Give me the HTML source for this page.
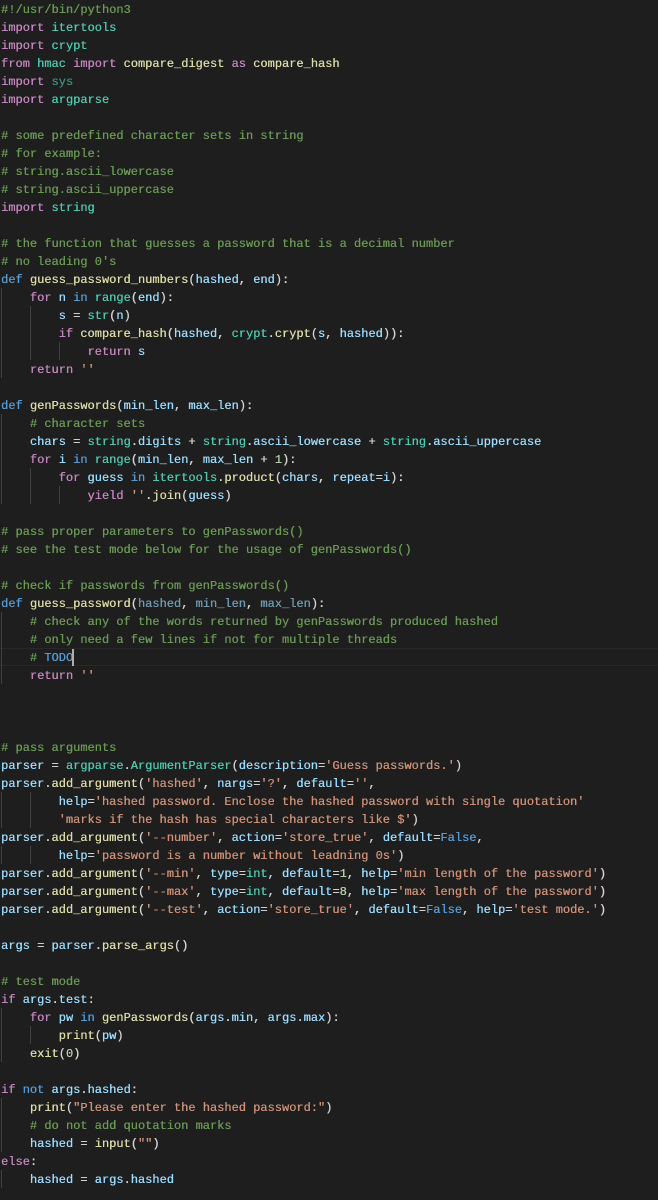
<!DOCTYPE html>
<html><head><meta charset="utf-8"><style>
html,body{margin:0;padding:0;background:#1e1e1e;width:658px;height:1200px;overflow:hidden}
pre{margin:0;padding:1px 0 0 1px;font-family:"Liberation Mono",monospace;font-size:12px;line-height:18px;color:#d4d4d4;position:relative;z-index:1;text-shadow:0.3px 0 0 currentColor}
.c{color:#6a9955}.k{color:#c586c0}.b{color:#569cd6}.f{color:#dcdcaa}.v{color:#9cdcfe}.t{color:#4ec9b0}.s{color:#ce9178}.n{color:#b5cea8}
.dv{color:#9cdcfe;opacity:.65}.dt{color:#4ec9b0;opacity:.65}
.g{position:absolute;width:1px;background:#404040;z-index:0}
.cur{position:absolute;left:0;width:658px;height:16px;border-top:1px solid #282828;border-bottom:1px solid #282828;top:648px}
.caret{display:inline-block;width:2px;height:17px;background:#aeafad;vertical-align:top;margin-left:-1px}
</style></head><body>
<div class="cur"></div>
<div class="g" style="left:1px;top:288px;height:90px"></div>
<div class="g" style="left:30px;top:306px;height:54px"></div>
<div class="g" style="left:59px;top:342px;height:18px"></div>
<div class="g" style="left:1px;top:414px;height:90px"></div>
<div class="g" style="left:30px;top:468px;height:36px"></div>
<div class="g" style="left:59px;top:486px;height:18px"></div>
<div class="g" style="left:1px;top:612px;height:72px"></div>
<div class="g" style="left:1px;top:792px;height:36px"></div>
<div class="g" style="left:30px;top:792px;height:36px"></div>
<div class="g" style="left:1px;top:846px;height:18px"></div>
<div class="g" style="left:30px;top:846px;height:18px"></div>
<div class="g" style="left:1px;top:1008px;height:54px"></div>
<div class="g" style="left:30px;top:1026px;height:18px"></div>
<div class="g" style="left:1px;top:1098px;height:54px"></div>
<div class="g" style="left:1px;top:1170px;height:18px"></div>
<pre><span class="c">#!/usr/bin/python3</span>
<span class="k">import</span> <span class="t">itertools</span>
<span class="k">import</span> <span class="t">crypt</span>
<span class="k">from</span> <span class="t">hmac</span> <span class="k">import</span> <span class="f">compare_digest</span> <span class="k">as</span> <span class="f">compare_hash</span>
<span class="k">import</span> <span class="dt">sys</span>
<span class="k">import</span> <span class="t">argparse</span>

<span class="c"># some predefined character sets in string</span>
<span class="c"># for example:</span>
<span class="c"># string.ascii_lowercase</span>
<span class="c"># string.ascii_uppercase</span>
<span class="k">import</span> <span class="t">string</span>

<span class="c"># the function that guesses a password that is a decimal number</span>
<span class="c"># no leading 0's</span>
<span class="b">def</span> <span class="f">guess_password_numbers</span>(<span class="v">hashed</span>, <span class="v">end</span>):
    <span class="k">for</span> <span class="v">n</span> <span class="b">in</span> <span class="t">range</span>(<span class="v">end</span>):
        <span class="v">s</span> = <span class="t">str</span>(<span class="v">n</span>)
        <span class="k">if</span> <span class="f">compare_hash</span>(<span class="v">hashed</span>, <span class="t">crypt</span>.<span class="f">crypt</span>(<span class="v">s</span>, <span class="v">hashed</span>)):
            <span class="k">return</span> <span class="v">s</span>
    <span class="k">return</span> <span class="s">''</span>

<span class="b">def</span> <span class="f">genPasswords</span>(<span class="v">min_len</span>, <span class="v">max_len</span>):
    <span class="c"># character sets</span>
    <span class="v">chars</span> = <span class="t">string</span>.<span class="v">digits</span> + <span class="t">string</span>.<span class="v">ascii_lowercase</span> + <span class="t">string</span>.<span class="v">ascii_uppercase</span>
    <span class="k">for</span> <span class="v">i</span> <span class="b">in</span> <span class="t">range</span>(<span class="v">min_len</span>, <span class="v">max_len</span> + <span class="n">1</span>):
        <span class="k">for</span> <span class="v">guess</span> <span class="b">in</span> <span class="t">itertools</span>.<span class="f">product</span>(<span class="v">chars</span>, <span class="v">repeat</span>=<span class="v">i</span>):
            <span class="k">yield</span> <span class="s">''</span>.<span class="f">join</span>(<span class="v">guess</span>)

<span class="c"># pass proper parameters to genPasswords()</span>
<span class="c"># see the test mode below for the usage of genPasswords()</span>

<span class="c"># check if passwords from genPasswords()</span>
<span class="b">def</span> <span class="f">guess_password</span>(<span class="dv">hashed</span>, <span class="dv">min_len</span>, <span class="dv">max_len</span>):
    <span class="c"># check any of the words returned by genPasswords produced hashed</span>
    <span class="c"># only need a few lines if not for multiple threads</span>
    <span class="c"># </span><span class="b">TODO</span><span class="caret"></span>
    <span class="k">return</span> <span class="s">''</span>



<span class="c"># pass arguments</span>
<span class="v">parser</span> = <span class="t">argparse</span>.<span class="t">ArgumentParser</span>(<span class="v">description</span>=<span class="s">'Guess passwords.'</span>)
<span class="v">parser</span>.<span class="f">add_argument</span>(<span class="s">'hashed'</span>, <span class="v">nargs</span>=<span class="s">'?'</span>, <span class="v">default</span>=<span class="s">''</span>,
        <span class="v">help</span>=<span class="s">'hashed password. Enclose the hashed password with single quotation'</span>
        <span class="s">'marks if the hash has special characters like $'</span>)
<span class="v">parser</span>.<span class="f">add_argument</span>(<span class="s">'--number'</span>, <span class="v">action</span>=<span class="s">'store_true'</span>, <span class="v">default</span>=<span class="b">False</span>,
        <span class="v">help</span>=<span class="s">'password is a number without leadning 0s'</span>)
<span class="v">parser</span>.<span class="f">add_argument</span>(<span class="s">'--min'</span>, <span class="v">type</span>=<span class="t">int</span>, <span class="v">default</span>=<span class="n">1</span>, <span class="v">help</span>=<span class="s">'min length of the password'</span>)
<span class="v">parser</span>.<span class="f">add_argument</span>(<span class="s">'--max'</span>, <span class="v">type</span>=<span class="t">int</span>, <span class="v">default</span>=<span class="n">8</span>, <span class="v">help</span>=<span class="s">'max length of the password'</span>)
<span class="v">parser</span>.<span class="f">add_argument</span>(<span class="s">'--test'</span>, <span class="v">action</span>=<span class="s">'store_true'</span>, <span class="v">default</span>=<span class="b">False</span>, <span class="v">help</span>=<span class="s">'test mode.'</span>)

<span class="v">args</span> = <span class="v">parser</span>.<span class="f">parse_args</span>()

<span class="c"># test mode</span>
<span class="k">if</span> <span class="v">args</span>.<span class="v">test</span>:
    <span class="k">for</span> <span class="v">pw</span> <span class="b">in</span> <span class="f">genPasswords</span>(<span class="v">args</span>.<span class="v">min</span>, <span class="v">args</span>.<span class="v">max</span>):
        <span class="f">print</span>(<span class="v">pw</span>)
    <span class="f">exit</span>(<span class="n">0</span>)

<span class="k">if</span> <span class="b">not</span> <span class="v">args</span>.<span class="v">hashed</span>:
    <span class="f">print</span>(<span class="s">"Please enter the hashed password:"</span>)
    <span class="c"># do not add quotation marks</span>
    <span class="v">hashed</span> = <span class="f">input</span>(<span class="s">""</span>)
<span class="k">else</span>:
    <span class="v">hashed</span> = <span class="v">args</span>.<span class="v">hashed</span>
</pre>
</body></html>
